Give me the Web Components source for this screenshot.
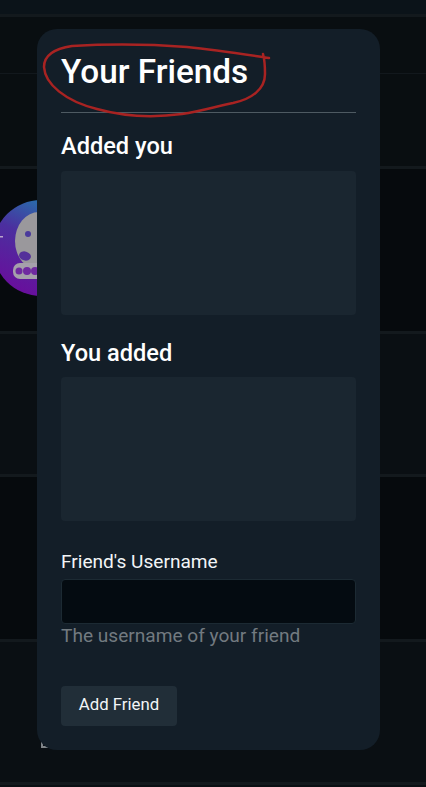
<!DOCTYPE html>
<html lang="en"><head><meta charset="utf-8"><title>Your Friends</title>
<style>
html,body{margin:0;padding:0;height:100%;background:#090e11;overflow:hidden}
body{font-family:Roboto,"Liberation Sans",sans-serif}
</style></head><body>
<feed-bg>
  <feed-row h="14" tone="#0b1319"></feed-row>
  <feed-row h="149" tone="#090e11" rule="56"></feed-row>
  <feed-row h="162" tone="#060a0d"></feed-row>
  <feed-row h="140" tone="#0a0f13"></feed-row>
  <feed-row h="162" tone="#060a0d"></feed-row>
  <feed-row h="140" tone="#0a0f13"></feed-row>
  <feed-row h="10" tone="#0a0f13"></feed-row>
</feed-bg>
<user-avatar></user-avatar>
<corner-mark></corner-mark>
<friends-dialog>
  <friend-section heading="Added you" slot="sections"></friend-section>
  <friend-section heading="You added" slot="sections" style="margin-top:4px" nudge="1"></friend-section>
  <text-field slot="form" label="Friend's Username" help="The username of your friend"></text-field>
  <app-button slot="action">Add Friend</app-button>
</friends-dialog>
<script>
function def(name, css, html){
  customElements.define(name, class extends HTMLElement{
    connectedCallback(){
      if(this.shadowRoot) return;
      const r=this.attachShadow({mode:'open'});
      r.innerHTML='<style>'+css+'</style>'+(typeof html==='function'?html(this):html);
    }
  });
}
def('feed-bg',':host{display:flex;flex-direction:column;height:100vh;overflow:hidden}','<slot></slot>');
def('feed-row',
 ':host{display:block;flex:none;border-bottom:3px solid #13191d}.rule{height:1px;background:#12181d}',
 el=>{el.style.height=el.getAttribute('h')+'px';el.style.background=el.getAttribute('tone');
   const m=el.getAttribute('rule');return m?`<div class="rule" style="margin-top:${m}px"></div>`:''});
def('user-avatar',
 ':host{display:block;position:absolute;left:-7px;top:200px;width:96px;height:96px}svg{display:block}',
 `<svg width="96" height="96" viewBox="0 0 96 96" role="img" aria-label="avatar">
  <defs><linearGradient id="g" x1="0.75" y1="0" x2="0.3" y2="1"><stop offset="0" stop-color="#1f7fae"/><stop offset=".45" stop-color="#4b2f9f"/><stop offset="1" stop-color="#6a0d9c"/></linearGradient></defs>
  <circle cx="48" cy="48" r="48" fill="url(#g)"/>
  <ellipse cx="46" cy="41" rx="24" ry="29" fill="#9a989c"/>
  <circle cx="35" cy="34" r="3" fill="#4a3a9c"/>
  <ellipse cx="32" cy="56" rx="6" ry="4.500" transform="rotate(15 32 56)" fill="#54309a"/>
  <rect x="20" y="63" width="36" height="16" rx="7" fill="#a5a0ab"/>
  <circle cx="26" cy="71" r="3.500" fill="#6f2aa0"/><circle cx="34" cy="71" r="4" fill="#6f2aa0"/><circle cx="42" cy="71" r="4" fill="#6f2aa0"/>
  <rect x="7" y="36" width="3" height="1.500" fill="#b9a6cc"/>
 </svg>`);
def('corner-mark',
 ':host{display:block;position:absolute;left:41px;top:740px;width:9px;height:8px;border-left:2px solid #7f8488;border-bottom:2px solid #7f8488;box-sizing:border-box}','');
def('friends-dialog',
 `:host{display:flex;flex-direction:column;position:absolute;left:37px;top:29px;width:343px;height:721px;box-sizing:border-box;padding:16px 24px 24px;background:#131e28;border-radius:20px;color:#fff}
  h1{margin:0;font:500 33.3px/40px Roboto,sans-serif;height:68px;box-sizing:border-box;padding-top:7px;border-bottom:1px solid #4e5a62;flex:none}
  .s{display:flex;flex-direction:column}
  .f{margin-top:28px}
  .a{margin-top:auto}
  svg{position:absolute;left:0;top:0;pointer-events:none;overflow:visible}`,
 `<h1>Your Friends</h1>
  <div class="s"><slot name="sections"></slot></div>
  <div class="f"><slot name="form"></slot></div>
  <div class="a"><slot name="action"></slot></div>
  <svg width="343" height="100" viewBox="0 0 343 100" aria-hidden="true"><path d="M232 29 C205 25 180 21 150 18 C110 15 70 15 35 17 C15 20 7 28 7 38 C8 55 28 72 60 80 C85 87 115 89 145 85 C165 82 180 77 196 74 C215 70 228 60 228 45 C228 38 228 32 226 25" fill="none" stroke="#a82322" stroke-width="2.500" stroke-linecap="round"/></svg>`);
def('friend-section',
 `:host{display:block}
  h2{margin:0;font:500 23.6px/28px Roboto,sans-serif;height:58px;box-sizing:border-box}
  .b{height:144px;background:#1a2630;border-radius:4px}`,
 el=>`<h2 style="padding-top:${19+(+el.getAttribute('nudge')||0)}px">${el.getAttribute('heading')}</h2><div class="b"></div>`);
def('text-field',
 `:host{display:block}
  label{display:block;font:400 19.1px/24px Roboto,sans-serif;color:#f2f5f7;padding-top:1px;margin-bottom:5px}
  input{display:block;box-sizing:border-box;width:100%;height:45px;background:#040b11;border:1px solid #1c2a33;border-radius:4px;color:#fff;outline:none;padding:0 12px}
  p{margin:0;font:400 19.1px/24px Roboto,sans-serif;color:#727a80}`,
 el=>`<label for="i">${el.getAttribute('label')}</label><input id="i" type="text"><p>${el.getAttribute('help')}</p>`);
def('app-button',
 `:host{display:inline-block;vertical-align:top}
  button{display:block;width:116px;height:40px;padding:0 0 3px;border:0;border-radius:4px;background:#212e38;color:#f2f5f7;font:400 16.8px/1 Roboto,sans-serif}`,
 `<button type="button"><slot></slot></button>`);
</script>
</body></html>
